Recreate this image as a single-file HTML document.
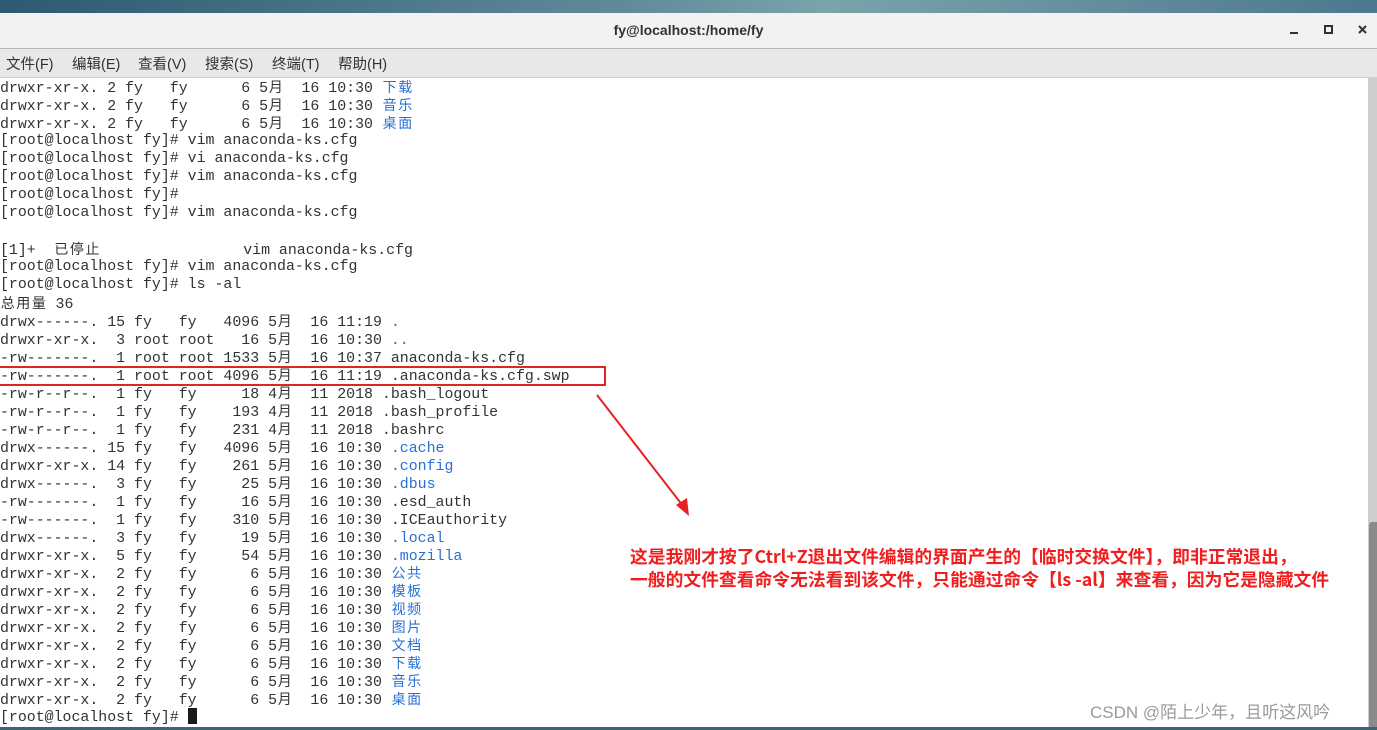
<!DOCTYPE html>
<html><head><meta charset="utf-8"><style>
body{margin:0;width:1377px;height:730px;overflow:hidden;background:#fff;position:relative;font-family:"Liberation Sans","Noto Sans CJK SC",sans-serif}
.top{position:absolute;left:0;top:0;width:1377px;height:13px;background:linear-gradient(90deg,#2d5a72,#5f8a9a 45%,#7aa3aa 60%,#4c7890)}
.title{position:absolute;left:0;top:13px;width:1377px;height:35px;background:#f2f2f2;border-bottom:1px solid #b8b8b8}
.title .t{position:absolute;left:0;right:0;top:9px;text-align:center;font-size:14px;color:#2e3436;font-weight:bold}
.menu{position:absolute;left:0;top:49px;width:1377px;height:28px;background:#e8e8e7;border-bottom:1px solid #cfcfcf;font-size:14.5px;color:#2e3436}
.menu span{position:absolute;top:4px}
.term{position:absolute;left:0;top:78px;font-family:"Liberation Mono","Noto Sans CJK SC",monospace;font-size:14.9px;color:#2e3436}
.l{position:absolute;left:0;height:18px;line-height:18px;white-space:pre}
.c{display:inline-block;width:2ch;text-align:center;font-style:normal;font-family:"Noto Sans CJK SC",sans-serif;font-size:14px}
.b{color:#2a6fd6}
.cur{display:inline-block;width:9px;height:16px;background:#1a1a1a;vertical-align:-3px}
.sb{position:absolute;left:1368px;top:78px;width:9px;height:649px;background:#cdcdcd}
.th{position:absolute;left:1369px;top:522px;width:8px;height:205px;background:#8a8a8a;border-radius:3px 0 0 0}
.bot{position:absolute;left:0;top:727px;width:1377px;height:3px;background:#3c6478}
.box{position:absolute;left:-2px;top:366px;width:604px;height:16px;border:2px solid #e02424}
.ann{position:absolute;left:630px;color:#f01e1e;font-weight:bold;font-size:17.8px;font-family:"Noto Sans CJK SC",sans-serif;white-space:nowrap;line-height:22px}
.wm{position:absolute;left:1090px;top:698px;color:#9a9a9a;font-size:17px;font-family:"Liberation Sans","Noto Sans CJK SC",sans-serif}
</style></head><body>
<div class="top"></div>
<div class="title"><div class="t">fy@localhost:/home/fy</div>
<svg style="position:absolute;left:1280px;top:8px" width="90" height="20"><rect x="10" y="11" width="8" height="2" fill="#2e3436"/><rect x="45" y="5" width="7" height="7" fill="none" stroke="#2e3436" stroke-width="2"/><path d="M79 5l7 7M86 5l-7 7" stroke="#2e3436" stroke-width="2"/></svg></div>
<div class="menu"><span style="left:6px">文件(F)</span><span style="left:72px">编辑(E)</span><span style="left:138px">查看(V)</span><span style="left:205px">搜索(S)</span><span style="left:272px">终端(T)</span><span style="left:338px">帮助(H)</span></div>
<div class="term">
<div class="l" style="top:0">drwxr-xr-x. 2 fy   fy      6 5<i class="c">月</i>  16 10:30 <span class="b"><i class="c">下</i><i class="c">载</i></span></div>
<div class="l" style="top:18px">drwxr-xr-x. 2 fy   fy      6 5<i class="c">月</i>  16 10:30 <span class="b"><i class="c">音</i><i class="c">乐</i></span></div>
<div class="l" style="top:36px">drwxr-xr-x. 2 fy   fy      6 5<i class="c">月</i>  16 10:30 <span class="b"><i class="c">桌</i><i class="c">面</i></span></div>
<div class="l" style="top:54px">[root@localhost fy]# vim anaconda-ks.cfg</div>
<div class="l" style="top:72px">[root@localhost fy]# vi anaconda-ks.cfg</div>
<div class="l" style="top:90px">[root@localhost fy]# vim anaconda-ks.cfg</div>
<div class="l" style="top:108px">[root@localhost fy]# </div>
<div class="l" style="top:126px">[root@localhost fy]# vim anaconda-ks.cfg</div>
<div class="l" style="top:162px">[1]+  <i class="c">已</i><i class="c">停</i><i class="c">止</i>                vim anaconda-ks.cfg</div>
<div class="l" style="top:180px">[root@localhost fy]# vim anaconda-ks.cfg</div>
<div class="l" style="top:198px">[root@localhost fy]# ls -al</div>
<div class="l" style="top:216px"><i class="c">总</i><i class="c">用</i><i class="c">量</i> 36</div>
<div class="l" style="top:234px">drwx------. 15 fy   fy   4096 5<i class="c">月</i>  16 11:19 <span class="b">.</span></div>
<div class="l" style="top:252px">drwxr-xr-x.  3 root root   16 5<i class="c">月</i>  16 10:30 <span class="b">..</span></div>
<div class="l" style="top:270px">-rw-------.  1 root root 1533 5<i class="c">月</i>  16 10:37 anaconda-ks.cfg</div>
<div class="l" style="top:288px">-rw-------.  1 root root 4096 5<i class="c">月</i>  16 11:19 .anaconda-ks.cfg.swp</div>
<div class="l" style="top:306px">-rw-r--r--.  1 fy   fy     18 4<i class="c">月</i>  11 2018 .bash_logout</div>
<div class="l" style="top:324px">-rw-r--r--.  1 fy   fy    193 4<i class="c">月</i>  11 2018 .bash_profile</div>
<div class="l" style="top:342px">-rw-r--r--.  1 fy   fy    231 4<i class="c">月</i>  11 2018 .bashrc</div>
<div class="l" style="top:360px">drwx------. 15 fy   fy   4096 5<i class="c">月</i>  16 10:30 <span class="b">.cache</span></div>
<div class="l" style="top:378px">drwxr-xr-x. 14 fy   fy    261 5<i class="c">月</i>  16 10:30 <span class="b">.config</span></div>
<div class="l" style="top:396px">drwx------.  3 fy   fy     25 5<i class="c">月</i>  16 10:30 <span class="b">.dbus</span></div>
<div class="l" style="top:414px">-rw-------.  1 fy   fy     16 5<i class="c">月</i>  16 10:30 .esd_auth</div>
<div class="l" style="top:432px">-rw-------.  1 fy   fy    310 5<i class="c">月</i>  16 10:30 .ICEauthority</div>
<div class="l" style="top:450px">drwx------.  3 fy   fy     19 5<i class="c">月</i>  16 10:30 <span class="b">.local</span></div>
<div class="l" style="top:468px">drwxr-xr-x.  5 fy   fy     54 5<i class="c">月</i>  16 10:30 <span class="b">.mozilla</span></div>
<div class="l" style="top:486px">drwxr-xr-x.  2 fy   fy      6 5<i class="c">月</i>  16 10:30 <span class="b"><i class="c">公</i><i class="c">共</i></span></div>
<div class="l" style="top:504px">drwxr-xr-x.  2 fy   fy      6 5<i class="c">月</i>  16 10:30 <span class="b"><i class="c">模</i><i class="c">板</i></span></div>
<div class="l" style="top:522px">drwxr-xr-x.  2 fy   fy      6 5<i class="c">月</i>  16 10:30 <span class="b"><i class="c">视</i><i class="c">频</i></span></div>
<div class="l" style="top:540px">drwxr-xr-x.  2 fy   fy      6 5<i class="c">月</i>  16 10:30 <span class="b"><i class="c">图</i><i class="c">片</i></span></div>
<div class="l" style="top:558px">drwxr-xr-x.  2 fy   fy      6 5<i class="c">月</i>  16 10:30 <span class="b"><i class="c">文</i><i class="c">档</i></span></div>
<div class="l" style="top:576px">drwxr-xr-x.  2 fy   fy      6 5<i class="c">月</i>  16 10:30 <span class="b"><i class="c">下</i><i class="c">载</i></span></div>
<div class="l" style="top:594px">drwxr-xr-x.  2 fy   fy      6 5<i class="c">月</i>  16 10:30 <span class="b"><i class="c">音</i><i class="c">乐</i></span></div>
<div class="l" style="top:612px">drwxr-xr-x.  2 fy   fy      6 5<i class="c">月</i>  16 10:30 <span class="b"><i class="c">桌</i><i class="c">面</i></span></div>
<div class="l" style="top:630px">[root@localhost fy]# <span class="cur"></span></div>
</div>
<div class="box"></div>
<svg style="position:absolute;left:0;top:0" width="1377" height="730"><line x1="597" y1="395" x2="683" y2="506" stroke="#e82020" stroke-width="2"/><path d="M689 516 L676 505 L687 498 Z" fill="#e82020"/></svg>
<div class="ann" style="top:545px">这是我刚才按了Ctrl+Z退出文件编辑的界面产生的【临时交换文件】，即非正常退出，</div>
<div class="ann" style="top:568px">一般的文件查看命令无法看到该文件，只能通过命令【ls -al】来查看，因为它是隐藏文件</div>
<div class="wm">CSDN @陌上少年，且听这风吟</div>
<div class="sb"></div><div class="th"></div>
<div class="bot"></div>
</body></html>
